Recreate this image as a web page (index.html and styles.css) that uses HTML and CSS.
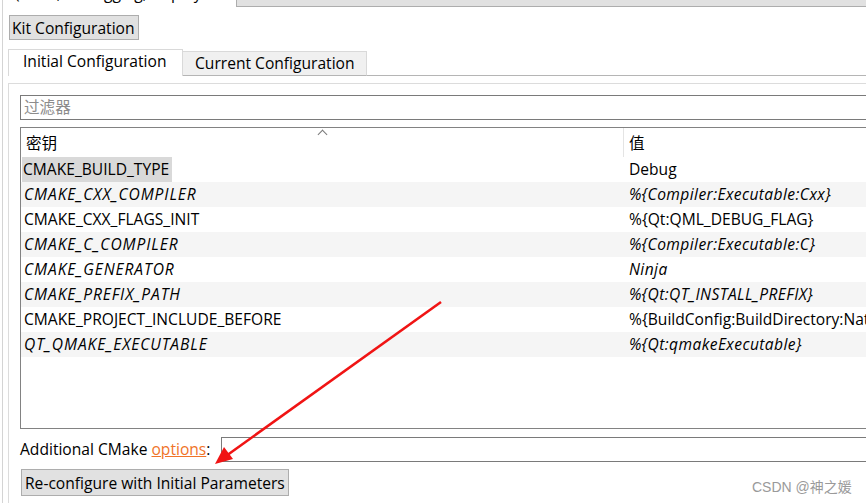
FILE: index.html
```html
<!DOCTYPE html>
<html>
<head>
<meta charset="utf-8">
<link rel="stylesheet" href="styles.css">
</head>
<body>
<div class="page">
  <div class="topbar">
    <div class="toptab-active"><span class="toptext">(Build, Debugging, Deployment, Setting</span></div>
    <div class="toptab"></div>
  </div>
  <div class="kitrow"><button class="btn kit">Kit Configuration</button></div>
  <div class="tabs">
    <div class="tab active">Initial Configuration</div>
    <div class="tab">Current Configuration</div>
    <div class="tabfill"></div>
  </div>
  <div class="pane">
    <div class="inner">
      <div class="filter">过滤器</div>
      <div class="table">
        <div class="thead">
          <div class="th key">密钥<span class="sort"></span></div>
          <div class="th val">值</div>
        </div>
        <div class="row"><div class="cell key"><span class="sel">CMAKE_BUILD_TYPE</span></div><div class="cell val">Debug</div></div>
        <div class="row alt it"><div class="cell key">CMAKE_CXX_COMPILER</div><div class="cell val">%{Compiler:Executable:Cxx}</div></div>
        <div class="row"><div class="cell key">CMAKE_CXX_FLAGS_INIT</div><div class="cell val">%{Qt:QML_DEBUG_FLAG}</div></div>
        <div class="row alt it"><div class="cell key">CMAKE_C_COMPILER</div><div class="cell val">%{Compiler:Executable:C}</div></div>
        <div class="row it"><div class="cell key">CMAKE_GENERATOR</div><div class="cell val">Ninja</div></div>
        <div class="row alt it"><div class="cell key">CMAKE_PREFIX_PATH</div><div class="cell val">%{Qt:QT_INSTALL_PREFIX}</div></div>
        <div class="row"><div class="cell key">CMAKE_PROJECT_INCLUDE_BEFORE</div><div class="cell val">%{BuildConfig:BuildDirectory:Nat</div></div>
        <div class="row alt it"><div class="cell key">QT_QMAKE_EXECUTABLE</div><div class="cell val">%{Qt:qmakeExecutable}</div></div>
      </div>
      <div class="extra">
        <span class="label">Additional CMake <a class="link">options</a>:</span>
        <div class="input"></div>
      </div>
      <div class="btnrow"><button class="btn reconf">Re-configure with Initial Parameters</button></div>
    </div>
  </div>
</div>
<svg class="arrow" width="866" height="503" viewBox="0 0 866 503">
  <line x1="441" y1="302" x2="226" y2="456" stroke="#f01414" stroke-width="2.6"/>
  <polygon points="215,464 233,459 224,447" fill="#f01414"/>
</svg>
<div class="watermark">CSDN @神之媛</div>
</body>
</html>
```

FILE: styles.css
```css
* { box-sizing: border-box; }
html, body { margin: 0; padding: 0; }
body {
  width: 866px;
  height: 503px;
  overflow: hidden;
  background: #ffffff;
  font-family: "Open Sans", "Noto Sans CJK SC", sans-serif;
  font-size: 15.6px;
  color: #000;
  position: relative;
}
.page {
  margin-left: 2px;
  border-left: 1px solid #d4d4d4;
  height: 503px;
  overflow: hidden;
}
.topbar {
  display: flex;
  height: 7px;
}
.toptab-active {
  width: 233px;
  overflow: hidden;
  padding-left: 12px;
  white-space: nowrap;
}
.toptext {
  display: block;
  margin-top: -17px;
  line-height: 20px;
}
.toptab {
  flex: 1;
  background: #e1e1e1;
  border-left: 1px solid #adadad;
  border-bottom: 1px solid #adadad;
}
.kitrow {
  padding: 8px 0 0 6px;
  height: 42px;
}
.btn {
  font-family: inherit;
  font-size: 15.6px;
  background: #e1e1e1;
  border: 1px solid #adadad;
  padding: 0 3px;
  margin: 0;
  color: #000;
  line-height: 22px;
  height: 25px;
  white-space: nowrap;
}
.kit { width: 130px; text-align: left; padding-left: 2px; }
.tabs {
  display: flex;
  align-items: flex-end;
  padding-left: 5px;
  height: 27px;
}
.tab {
  height: 25px;
  padding: 0 0 0 12px;
  width: 184px;
  background: #f0f0f0;
  border: 1px solid #d9d9d9;
  border-left: none;
  border-bottom: 1px solid #b5b5b5;
  line-height: 22px;
  white-space: nowrap;
}
.tab.active {
  width: 175px;
  height: 27px;
  background: #fff;
  border-left: 1px solid #d9d9d9;
  border-bottom: none;
  padding-left: 14px;
}
.tabfill {
  flex: 1;
  border-bottom: 1px solid #b5b5b5;
  height: 1px;
}
.pane {
  padding: 7px 0 0 5px;
}
.inner {
  border-top: 1px solid #dcdcdc;
  border-left: 1px solid #dcdcdc;
  padding: 11px 0 0 11px;
  height: 430px;
  width: 900px;
}
.filter {
  height: 25px;
  border: 1px solid #7a7a7a;
  color: #8c8c8c;
  padding-left: 3px;
  line-height: 22px;
}
.table {
  margin-top: 7px;
  height: 302px;
  border: 1px solid #828282;
  overflow: hidden;
}
.thead {
  display: flex;
  height: 29px;
  align-items: stretch;
}
.th {
  line-height: 30px;
  position: relative;
}
.th.key {
  width: 603px;
  flex-shrink: 0;
  padding-left: 5px;
  border-right: 1px solid #e4e4e4;
}
.th.val { padding-left: 5px; }
.sort {
  position: absolute;
  left: 298px;
  top: 3px;
  width: 7px;
  height: 7px;
  border-left: 1px solid #7a7a7a;
  border-top: 1px solid #7a7a7a;
  transform: rotate(45deg);
}
.row {
  display: flex;
  height: 25px;
  line-height: 25px;
  white-space: nowrap;
}
.row.alt { background: #f5f5f5; }
.row.it { font-style: italic; }
.row.it .cell.key { letter-spacing: 0.9px; }
.row.it .cell.val { letter-spacing: 0.4px; }
.cell.key {
  width: 604px;
  flex-shrink: 0;
  padding-left: 3px;
  overflow: hidden;
}
.cell.val {
  padding-left: 4px;
}
.sel {
  display: inline-block;
  background: #d9d9d9;
  padding: 0 3px 0 1px;
  margin-left: -2px;
}
.extra {
  display: flex;
  align-items: center;
  margin-top: 7px;
  height: 26px;
}
.label {
  width: 201px;
  white-space: nowrap;
}
.link {
  color: #f07328;
  text-decoration: underline;
}
.input {
  flex: 1;
  height: 25px;
  border: 1px solid #7a7a7a;
}
.btnrow {
  padding-top: 7px;
  padding-left: 1px;
}
.reconf {
  height: 27px;
  text-align: left;
  padding: 0 3px;
}
.arrow {
  position: absolute;
  left: 0;
  top: 0;
  pointer-events: none;
}
.watermark {
  position: absolute;
  left: 752px;
  top: 476px;
  font-family: "Liberation Sans", "Noto Sans CJK SC", sans-serif;
  font-size: 14px;
  color: #9a9a9a;
  white-space: nowrap;
}
```
